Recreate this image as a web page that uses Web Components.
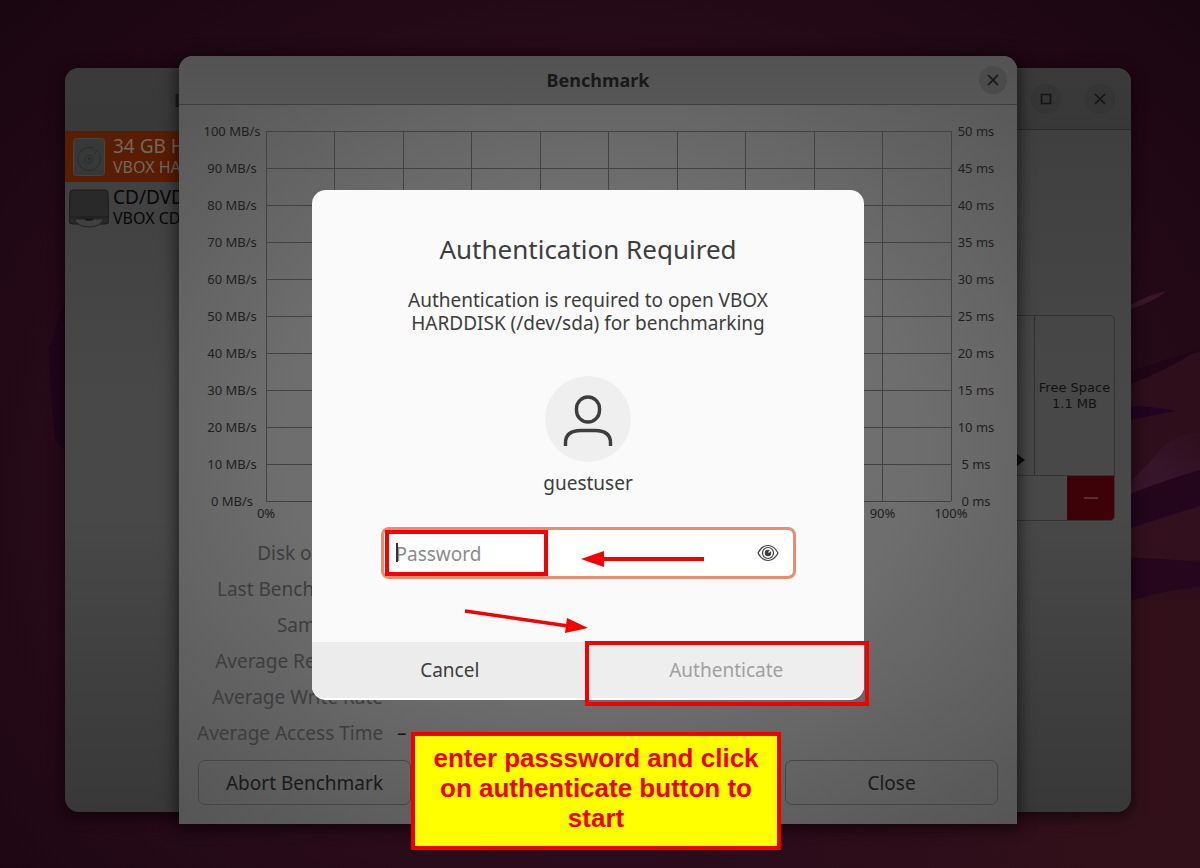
<!DOCTYPE html>
<html lang="en">
<head>
<meta charset="utf-8">
<title>Disks – Benchmark</title>
<style>
html,body{margin:0;min-height:100%;background:#220915}
body{font-family:"Noto Sans","Open Sans",sans-serif;font-size:19px;line-height:24px;color:#1b1b1b}
</style>
</head>
<body>
<ubuntu-desktop>
  <disks-window slot="back">
    <drive-row kind="disk" selected><span slot="name">34 GB H</span><span slot="model">VBOX HA</span></drive-row>
    <drive-row kind="optical"><span slot="name">CD/DVD</span><span slot="model">VBOX CD</span></drive-row>
  </disks-window>
  <benchmark-window slot="front"></benchmark-window>
  <auth-dialog slot="modal">
    <span slot="title">Authentication Required</span>
    <span slot="message">Authentication is required to open VBOX HARDDISK (/dev/sda) for benchmarking</span>
    <span slot="user">guestuser</span>
    <guide-notes slot="notes">enter passsword and click on authenticate button to start</guide-notes>
  </auth-dialog>
</ubuntu-desktop>
<script>
const define = (name, html, setup) => customElements.define(name, class extends HTMLElement {
  constructor() {
    super();
    const t = document.createElement('template');
    t.innerHTML = html;
    this.attachShadow({mode: 'open'}).append(t.content.cloneNode(true));
  }
  connectedCallback() { if (setup) setup(this, this.shadowRoot); }
});

define('ubuntu-desktop', `
<style>
:host{display:block;position:relative;min-height:max(100vh,868px);overflow:hidden;
 background:radial-gradient(ellipse at 50% 58%,#340d20 0%,#2d0c1c 45%,#200814 80%,#190610 100%)}
svg{position:absolute;top:0;height:868px}
.l{left:0}.r{right:0}
::slotted([slot=back]){position:absolute;left:65px;right:69px;top:68px}
::slotted([slot=front]){position:absolute;left:179px;right:183px;top:56px}
::slotted([slot=modal]){position:absolute;left:calc(50% - 288px);top:190px}
</style>
<svg class="l" width="70" viewBox="0 0 70 868" aria-hidden="true"><path d="M70 290L61 312 49 348 51 390 55 440 70 456Z" fill="#1f0519"/></svg>
<svg class="r" width="500" viewBox="700 0 500 868" aria-hidden="true">
<defs><linearGradient id="g" x1="0" y1="0" x2="1" y2="0"><stop offset="0" stop-color="#32101a" stop-opacity="0"/><stop offset=".8" stop-color="#32101a"/></linearGradient>
<linearGradient id="w" x1="0" y1="1" x2="1" y2="0"><stop offset="0" stop-color="#3a1628"/><stop offset=".5" stop-color="#36142a"/><stop offset="1" stop-color="#2f0f1c"/></linearGradient></defs>
<path d="M1110 380Q1160 360 1200 352V600H1110Z" fill="#2e0e1b"/>
<path d="M700 600H1200V868H700Z" fill="url(#g)"/>
<path d="M1120 312Q1140 297 1166 291Q1154 303 1120 312Z" fill="#3a1629"/>
<path d="M1110 378Q1150 365 1200 349Q1165 372 1110 392Z" fill="#200517"/>
<path d="M1110 408Q1145 404 1176 411Q1150 416 1110 424Z" fill="#220420"/>
<path d="M1110 500Q1140 475 1160 450Q1175 434 1200 432V470Q1160 482 1110 500Z" fill="url(#w)"/>
<path d="M1110 505Q1150 484 1200 470V506Q1160 520 1110 535Z" fill="#24061c"/>
<path d="M1110 535Q1160 518 1200 506V560H1110Z" fill="#32101d"/>
<path d="M1110 557Q1160 558 1200 562V587Q1160 590 1110 607Z" fill="#25061c"/>
</svg>
<slot name="back"></slot><slot name="front"></slot><slot name="modal"></slot>`);

define('window-button', `
<style>
:host{display:block;width:30px;height:30px}
button{all:unset;box-sizing:border-box;width:100%;height:100%;border-radius:50%;background:var(--disc,#4b4b4b);display:grid;place-items:center}
svg{width:14px;height:14px;fill:none;stroke:#151515;stroke-width:1.700}
</style>
<button><svg viewBox="0 0 14 14" aria-hidden="true"></svg></button>`, (h, r) => {
  const close = h.getAttribute('kind') === 'close';
  r.querySelector('button').setAttribute('aria-label', close ? 'Close' : 'Maximize');
  r.querySelector('svg').innerHTML = close ? '<path d="M2 2L12 12M12 2L2 12"/>' : '<path d="M2.500 2.500H11.500V11.500H2.500Z"/>';
});

define('drive-row', `
<style>
:host{display:flex;align-items:center;gap:4px;height:51px;padding:0 4px;color:#070707;line-height:21px;white-space:nowrap}
:host([selected]){background:#591d02;color:#726663}
svg{width:40px;height:44px;flex:none}
.n{display:block;font-size:19px}.m{display:block;font-size:16px;line-height:20px}
</style>
<svg viewBox="0 0 40 44" aria-hidden="true"></svg>
<div><slot class="n" name="name"></slot><slot class="m" name="model"></slot></div>`, (h, r) => {
  r.querySelector('svg').innerHTML = h.getAttribute('kind') === 'disk'
  ? '<rect x="4.500" y="3.500" width="31" height="37" rx="3" fill="#363938" stroke="#434544"/><circle cx="20" cy="24" r="11.500" fill="none" stroke="#282b2a" stroke-dasharray="64 8" stroke-dashoffset="-66"/><circle cx="20" cy="24" r="4" fill="none" stroke="#292c2b"/><circle cx="20" cy="24" r="1.500" fill="#292c2b"/><path d="M25 19L29 15" stroke="#292c2b"/>'
  : '<path d="M1 7Q1 4 4 4H36Q39 4 39 7L40 35Q40 38 36 38H4Q0 38 0 35Z" fill="#292929" stroke="#1a1a1a"/><path d="M1 31H39" stroke="#1c1c1c"/><path d="M5 33H35Q31 41 20 41Q9 41 5 33Z" fill="#404040" stroke="#222"/><path d="M15 32.500H25Q24 35 20 35Q16 35 15 32.500Z" fill="#191919"/>';
});

define('disks-window', `
<style>
:host{display:block;border-radius:14px;overflow:hidden;box-shadow:0 3px 14px 2px #0008;
 background:linear-gradient(#3d3d3d,#484848 45%,#484848 60%,#383838)}
.w{display:grid;grid-template-columns:266px 1fr;min-height:744px}
.t{height:63px;display:grid;place-items:center;font-size:18px;font-weight:700;background:linear-gradient(#3a3a3a,#393939)}
main{display:flex;flex-direction:column}
header{height:61px;background:linear-gradient(#3a3a3a,#383838);border-bottom:1px solid #2a2a2a;display:flex;align-items:center;justify-content:flex-end;gap:24px;padding-right:16px;--disc:#353535}
.v{margin:185px 16px 0;border:1px solid #323232;border-radius:5px;overflow:hidden}
.p{display:grid;grid-template-columns:1fr 80px;height:159px;border-bottom:1px solid #343434}
.f{border-left:1px solid #303030;display:grid;place-content:center;text-align:center;font:13px/16px "DejaVu Sans",sans-serif;color:#111;white-space:nowrap}
.s{display:flex;align-items:flex-end;justify-content:flex-end;padding:0 9px 9px}
.b{display:flex;justify-content:flex-end;height:44px}
.b button{all:unset;width:47px;background:#3c0208;display:grid;place-items:center}
</style>
<div class="w">
<aside><div class="t">Disks</div><slot></slot></aside>
<main><header><window-button kind="max"></window-button><window-button kind="close"></window-button></header>
<section class="v"><div class="p"><div class="s"><svg width="8" height="12" aria-hidden="true"><path d="M0 0L8 6 0 12Z" fill="#0c0c0c"/></svg></div>
<div class="f"><span>Free Space</span><span>1.1 MB</span></div></div>
<div class="b"><button aria-label="Delete partition"><svg width="14" height="2" aria-hidden="true"><path d="M0 1H14" stroke="#77585a" stroke-width="1"/></svg></button></div></section></main>
</div>`);

define('benchmark-chart', `
<style>
:host{display:grid;grid-template-columns:68px 1fr 50px;grid-template-rows:auto 16px;font-size:13px;line-height:16px;color:#1e1e1e;white-space:nowrap}
ol{list-style:none;margin:0;padding:0;text-align:center}
.y li{height:37px;display:grid;place-items:center}
.g{margin:19px 0 18px;height:370px}
svg{display:block;width:100%;height:100%;overflow:visible}
line{stroke:#424242;shape-rendering:crispEdges}
.x{grid-column:2;display:flex;justify-content:space-between;margin-top:-14px}
.x li{width:0;display:flex;justify-content:center}
</style>
<ol class="y" id="mb"></ol><div class="g"><svg aria-label="Transfer rate and access time"></svg></div><ol class="y" id="ms"></ol>
<ol class="x"></ol>`, (h, r) => {
  let g = '', a = '', b = '', x = '';
  for (let i = 0; i <= 10; i++) {
    const p = i * 10 + '%';
    g += `<line x1="${p}" x2="${p}" y1="0" y2="100%"/><line x1="0" x2="100%" y1="${p}" y2="${p}"/>`;
    a += `<li>${100 - i * 10} MB/s</li>`; b += `<li>${50 - i * 5} ms</li>`; x += `<li>${p}</li>`;
  }
  r.querySelector('svg').innerHTML = g;
  r.querySelector('#mb').innerHTML = a; r.querySelector('#ms').innerHTML = b; r.querySelector('.x').innerHTML = x;
});

define('benchmark-window', `
<style>
:host{display:block;min-height:768px;border-radius:14px 14px 0 0;box-shadow:0 2px 16px 2px #0009;
 background:radial-gradient(ellipse 75% 65% at 50% 50%,#727272,#6e6e6e 50%,#565656)}
header{display:grid;grid-template-columns:38px 1fr 38px;align-items:center;height:48px;border-bottom:1px solid #3e3e3e;border-radius:14px 14px 0 0;background:linear-gradient(#535353,#565656)}
h1{grid-column:2;margin:0;text-align:center;font-size:18px;line-height:24px;color:#191919}
window-button{width:28px;height:28px}
benchmark-chart{margin:7px 16px 0 19px}
dl{display:grid;grid-template-columns:186px 1fr;column-gap:14px;grid-auto-rows:36px;align-items:center;margin:0 18px;white-space:nowrap}
dt{text-align:right;color:#3d3d3d}dd{margin:0;color:#191919}
footer{display:flex;justify-content:space-between;padding:9px 19px 19px}
footer button{all:unset;box-sizing:border-box;width:213px;height:45px;border:1px solid #454545;border-radius:7px;text-align:center;color:#191919}
</style>
<header><h1>Benchmark</h1><window-button kind="close" style="--disc:#4b4b4b"></window-button></header>
<benchmark-chart></benchmark-chart>
<dl><dt>Disk or Device</dt><dd></dd><dt>Last Benchmarked</dt><dd></dd><dt>Sample Size</dt><dd></dd><dt>Average Read Rate</dt><dd></dd><dt>Average Write Rate</dt><dd></dd><dt>Average Access Time</dt><dd>–</dd></dl>
<footer><button>Abort Benchmark</button><button>Close</button></footer>`);

define('auth-dialog', `
<style>
:host{display:block;width:552px;color:#3d3d3d}
.d{display:flex;flex-direction:column;align-items:center;text-align:center;background:#fafafa;border-radius:14px;overflow:hidden;padding-top:42px;border-bottom:2px solid #fff}
h2{margin:0;font-weight:400;font-size:26px;line-height:34px}
p{margin:23px 0 41px;max-width:380px;line-height:23px}
.u{margin:9px 0 32px}
.e{position:relative;box-sizing:border-box;width:415px;height:52px;border:3px solid #ec8b6d;border-radius:8px;background:#fff;display:flex;align-items:center;padding:0 14px 0 12px}
input{flex:1;min-width:0;border:0;outline:0;padding:1px 0 0;background:none;font:inherit;color:#3d3d3d}
input::placeholder{color:#8b8b8b;opacity:1}
.c{position:absolute;left:12px;top:13px;width:2px;height:19px;background:#333}
.e button{all:unset;display:flex}
.a{display:grid;grid-template-columns:1fr 1fr;align-self:stretch;margin-top:63px;height:56px;gap:1px;background:#f2f2f2}
.a button{border:0;padding:0;background:#ececec;font:inherit;color:#3d3d3d}
.a button:disabled{background:#eee;color:#a0a0a0}
</style>
<div class="d" role="dialog" aria-labelledby="t">
<h2 id="t"><slot name="title"></slot></h2><p><slot name="message"></slot></p>
<svg width="86" height="86" viewBox="0 0 86 86" aria-hidden="true"><circle cx="43" cy="43" r="43" fill="#efefef"/><g fill="none" stroke="#3d3d3d" stroke-width="3.400"><rect x="31.500" y="21" width="23" height="25" rx="11.500"/><path d="M20.500 70V67Q20.500 54.500 36 54.500H50Q65.500 54.500 65.500 67V70"/></g></svg>
<label class="u" for="pw"><slot name="user"></slot></label>
<div class="e"><input id="pw" type="password" placeholder="Password"><span class="c"></span>
<button aria-label="Show password"><svg width="22" height="18" viewBox="0 0 22 18" fill="none" stroke="#3d3d3d" stroke-width="1.200" aria-hidden="true"><path d="M1 9Q5 1.500 11 1.500T21 9Q17 16.500 11 16.500T1 9Z"/><circle cx="11" cy="9" r="5.500"/><circle cx="11" cy="9" r="2.600" fill="#3d3d3d"/><path d="M11.500 8.500L14 6" stroke="#fff" stroke-width="1.200"/></svg></button></div>
<div class="a"><button>Cancel</button><button disabled>Authenticate</button></div>
</div>
<slot name="notes"></slot>`);

define('guide-notes', `
<style>
:host{position:absolute;left:0;top:0;width:100%;height:100%;pointer-events:none}
i{position:absolute;box-sizing:border-box;border:4px solid #f40000}
.p{left:73px;top:340px;width:163px;height:46px}
.b{left:273px;top:451px;width:284px;height:65px}
svg{position:absolute;left:0;top:0;overflow:visible}
.n{position:absolute;left:99px;top:542px;box-sizing:border-box;width:370px;height:118px;border:4px solid #ee0000;background:#ff0;padding:7px 14px;text-align:center;font:700 26px/30px "Liberation Sans",Arial,sans-serif;color:#f00000}
</style>
<i class="p"></i><i class="b"></i>
<svg width="552" height="510" aria-hidden="true"><g fill="#f60000" stroke="none"><path d="M269 369L292 361V377Z"/><path d="M276 438L253 443 255 428Z"/></g><g stroke="#f40000" stroke-width="4"><path d="M290 369H392"/><path d="M153 421L256 436" stroke-width="3.500"/></g></svg>
<div class="n"><slot></slot></div>`);
</script>
</body>
</html>
